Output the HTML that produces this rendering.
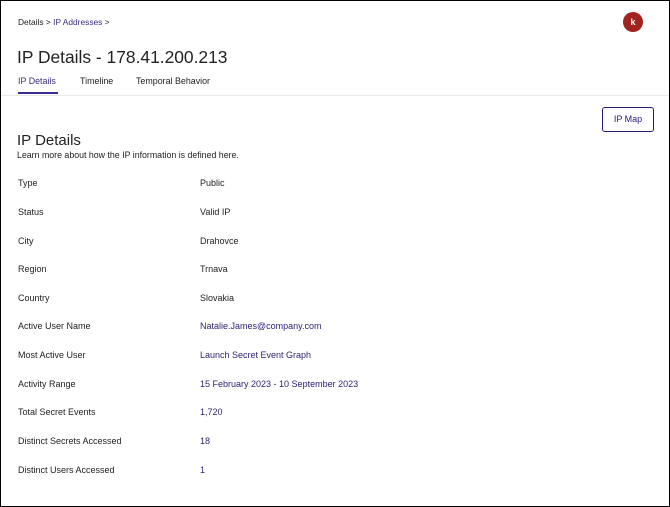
<!DOCTYPE html>
<html><head><style>
*{margin:0;padding:0;box-sizing:border-box}
html,body{width:670px;height:507px;overflow:hidden;background:#fff}
body{font-family:"Liberation Sans",sans-serif;color:#222;position:relative;border:1px solid #000}
.a{position:absolute;white-space:nowrap}
.bc{top:16px;left:17px;font-size:8.4px;color:#222}
.bc span{color:#3a2d80}
.t{top:46px;left:16px;font-size:17.4px;color:#222}
.tab{top:75px;font-size:8.9px;color:#222}
.ul{top:91px;left:17px;width:40px;height:2px;background:#3a2d8f}
.hr{top:94px;left:0;width:668px;height:1px;background:#e8e8e8}
.av{top:11px;left:622px;width:20px;height:20px;border-radius:50%;background:#a1231f;color:#fff;font-size:9px;font-weight:bold;text-align:center;line-height:20px}
.btn{top:106px;left:601px;width:52px;height:25px;border:1.5px solid #2a1a7a;border-radius:3px;color:#2a1a7a;font-size:9px;text-align:center;line-height:22px}
.h{top:131px;left:16px;font-size:15px;color:#222}
.sub{top:149px;left:16px;font-size:8.8px;color:#222}
.l{left:17px;font-size:9px;color:#222}
.v{left:199px;font-size:9px;color:#222}
.p{color:#2a1f72}
</style></head><body>
<div class="a bc">Details &gt; <span>IP Addresses</span> &gt;</div>
<div class="av a">k</div>
<div class="a t">IP Details - 178.41.200.213</div>
<div class="a tab" style="left:17px;color:#3a2d80">IP Details</div>
<div class="a tab" style="left:79px">Timeline</div>
<div class="a tab" style="left:135px">Temporal Behavior</div>
<div class="a ul"></div>
<div class="a hr"></div>
<div class="a btn">IP Map</div>
<div class="a h">IP Details</div>
<div class="a sub">Learn more about how the IP information is defined here.</div>
<div class="a l" style="top:177px">Type</div><div class="a v" style="top:177px">Public</div>
<div class="a l" style="top:206px">Status</div><div class="a v" style="top:206px">Valid IP</div>
<div class="a l" style="top:235px">City</div><div class="a v" style="top:235px">Drahovce</div>
<div class="a l" style="top:263px">Region</div><div class="a v" style="top:263px">Trnava</div>
<div class="a l" style="top:292px">Country</div><div class="a v" style="top:292px">Slovakia</div>
<div class="a l" style="top:320px">Active User Name</div><div class="a v p" style="top:320px">Natalie.James@company.com</div>
<div class="a l" style="top:349px">Most Active User</div><div class="a v p" style="top:349px">Launch Secret Event Graph</div>
<div class="a l" style="top:378px">Activity Range</div><div class="a v p" style="top:378px">15 February 2023 - 10 September 2023</div>
<div class="a l" style="top:406px">Total Secret Events</div><div class="a v p" style="top:406px">1,720</div>
<div class="a l" style="top:435px">Distinct Secrets Accessed</div><div class="a v p" style="top:435px">18</div>
<div class="a l" style="top:464px">Distinct Users Accessed</div><div class="a v p" style="top:464px">1</div>
</body></html>
